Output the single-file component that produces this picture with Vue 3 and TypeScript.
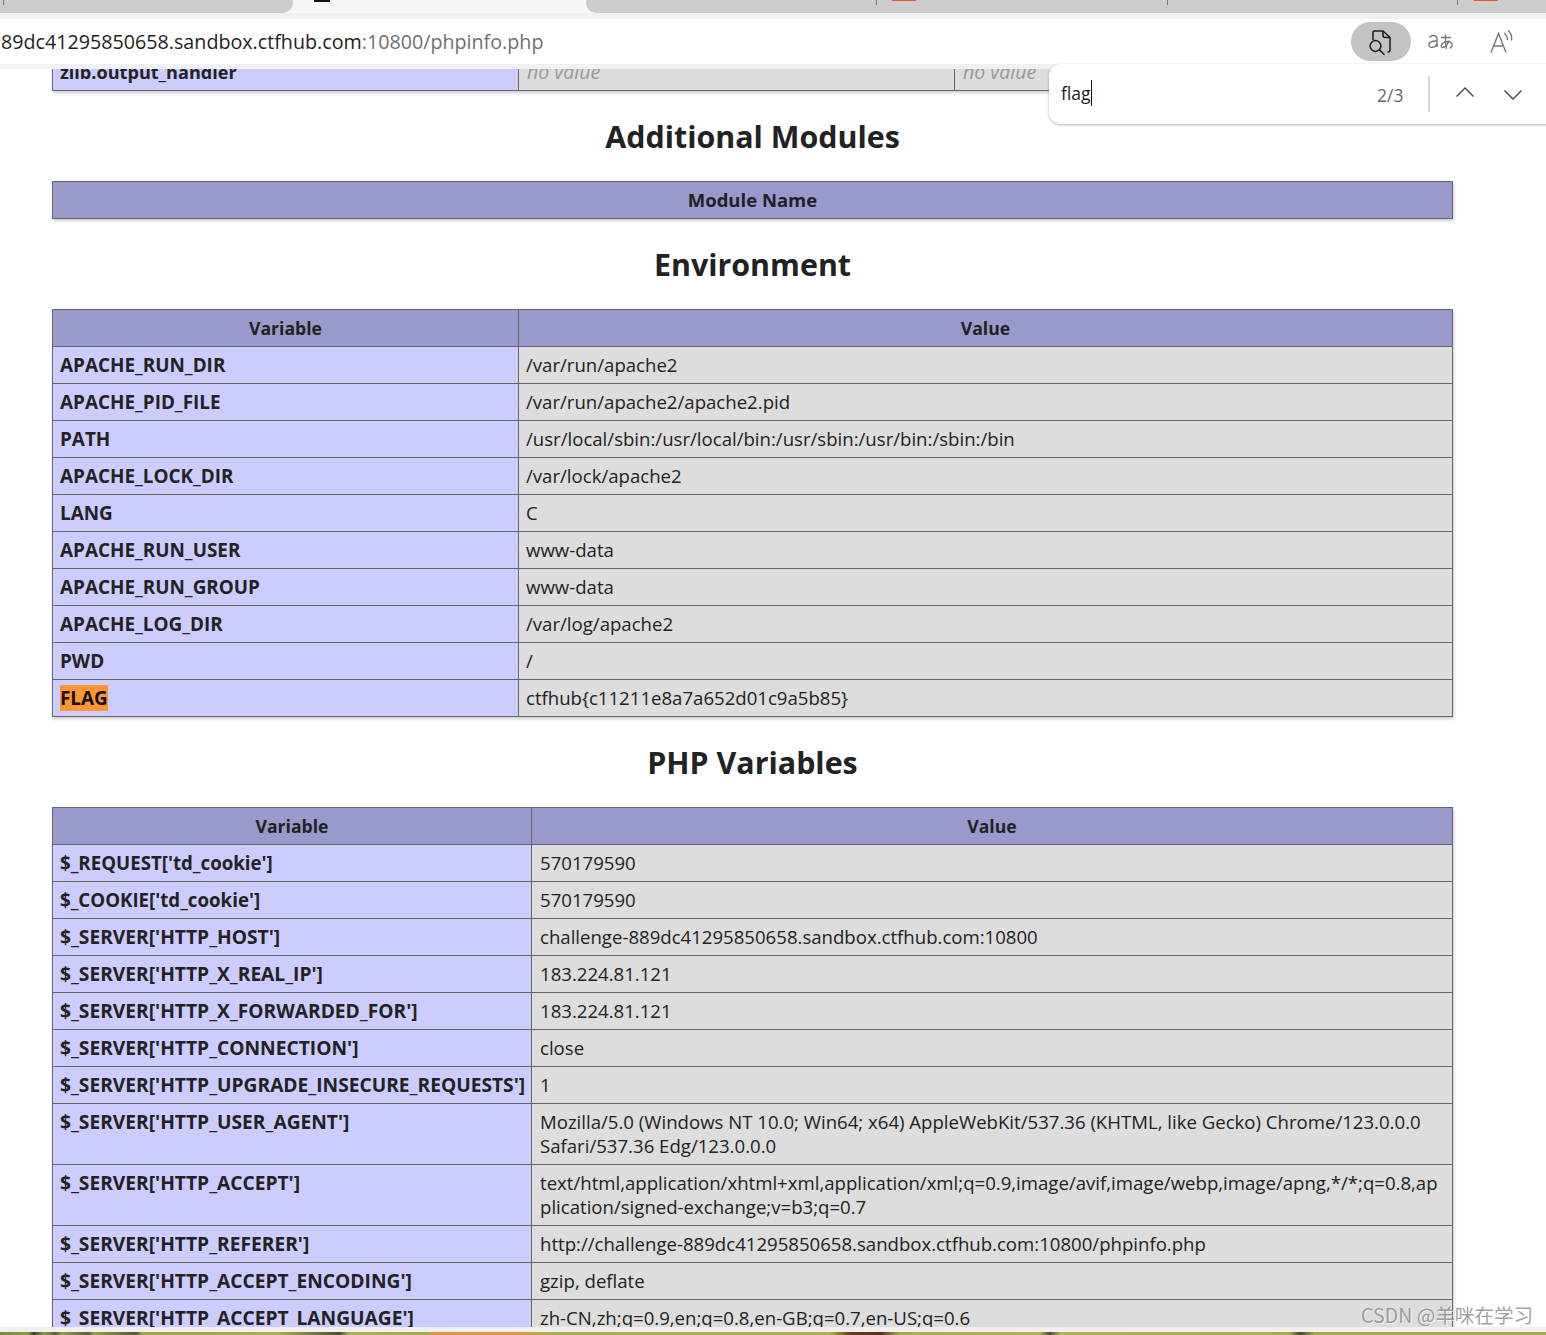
<script setup lang="ts">
interface Row { k: string; v: string; mark?: boolean }
const envRows: Row[] = [
  { k: 'APACHE_RUN_DIR', v: '/var/run/apache2' },
  { k: 'APACHE_PID_FILE', v: '/var/run/apache2/apache2.pid' },
  { k: 'PATH', v: '/usr/local/sbin:/usr/local/bin:/usr/sbin:/usr/bin:/sbin:/bin' },
  { k: 'APACHE_LOCK_DIR', v: '/var/lock/apache2' },
  { k: 'LANG', v: 'C' },
  { k: 'APACHE_RUN_USER', v: 'www-data' },
  { k: 'APACHE_RUN_GROUP', v: 'www-data' },
  { k: 'APACHE_LOG_DIR', v: '/var/log/apache2' },
  { k: 'PWD', v: '/' },
  { k: 'FLAG', v: 'ctfhub{c11211e8a7a652d01c9a5b85}', mark: true },
]
const phpRows: Row[] = [
  { k: "$_REQUEST['td_cookie']", v: '570179590' },
  { k: "$_COOKIE['td_cookie']", v: '570179590' },
  { k: "$_SERVER['HTTP_HOST']", v: 'challenge-889dc41295850658.sandbox.ctfhub.com:10800' },
  { k: "$_SERVER['HTTP_X_REAL_IP']", v: '183.224.81.121' },
  { k: "$_SERVER['HTTP_X_FORWARDED_FOR']", v: '183.224.81.121' },
  { k: "$_SERVER['HTTP_CONNECTION']", v: 'close' },
  { k: "$_SERVER['HTTP_UPGRADE_INSECURE_REQUESTS']", v: '1' },
  { k: "$_SERVER['HTTP_USER_AGENT']", v: 'Mozilla/5.0 (Windows NT 10.0; Win64; x64) AppleWebKit/537.36 (KHTML, like Gecko) Chrome/123.0.0.0 Safari/537.36 Edg/123.0.0.0' },
  { k: "$_SERVER['HTTP_ACCEPT']", v: 'text/html,application/xhtml+xml,application/xml;q=0.9,image/avif,image/webp,image/apng,*/*;q=0.8,application/signed-exchange;v=b3;q=0.7' },
  { k: "$_SERVER['HTTP_REFERER']", v: 'http://challenge-889dc41295850658.sandbox.ctfhub.com:10800/phpinfo.php' },
  { k: "$_SERVER['HTTP_ACCEPT_ENCODING']", v: 'gzip, deflate' },
  { k: "$_SERVER['HTTP_ACCEPT_LANGUAGE']", v: 'zh-CN,zh;q=0.9,en;q=0.8,en-GB;q=0.7,en-US;q=0.6' },
]
</script>

<template>
  <div class="window">
    <header class="chrome">
      <div class="tabs">
        <div class="tab tab-left"><i class="sep sep-left"></i></div>
        <div class="tab tab-active"><span class="tab-glyph"></span></div>
        <div class="tab tab-right">
          <i class="sep" style="left: 290px"></i><i class="fav" style="left: 306px"></i>
          <i class="sep" style="left: 581px"></i>
          <i class="sep" style="left: 871px"></i><i class="fav" style="left: 888px"></i>
        </div>
      </div>
      <div class="addr">
        <div class="url">89dc41295850658.sandbox.ctfhub.com<span class="path">:10800/phpinfo.php</span></div>
        <div class="tools">
          <span class="tool tool-on">
            <svg width="26" height="28" viewBox="0 0 26 28" fill="none" stroke="#1a1a1a" stroke-width="1.5">
              <path d="M5 12V4.5Q5 3 6.5 3H15L22 9.5V22Q22 24 20 24H19.5" />
              <path d="M15 3V7.5Q15 9.5 17 9.5H22" />
              <circle cx="7.5" cy="18" r="5.4" />
              <path d="M11.3 21.8L16.5 26.8" />
            </svg>
          </span>
          <span class="tool">
            <svg width="28" height="22" viewBox="0 0 28 22" fill="none" stroke="#777" stroke-width="1.4">
              <path d="M2.5 6.5Q4 4.5 6.5 4.5Q10 4.5 10 8V16" />
              <path d="M10 10Q3 9.5 2 13Q1.5 16.5 5 16.5Q8 16.5 10 13" />
              <path d="M14 6.5H24M18.5 3.5Q18 12 19.5 18M22 9.5Q20 16 15.5 16.5Q13 15.5 15.5 12.5Q19 9.5 23.5 11Q27 13.5 23 17.5" />
            </svg>
          </span>
          <span class="tool tool-read">
            <svg width="26" height="24" viewBox="0 0 26 24" fill="none" stroke="#777" stroke-width="1.4">
              <path d="M2 22.5L9.5 3.5L17 22.5M4.6 16H14.4" />
              <path d="M15 3Q18.5 5.5 18.5 10M19 0.5Q23.5 4.5 22.5 10.5" />
            </svg>
          </span>
        </div>
      </div>
    </header>

    <main class="page">
      <table class="info top-table">
        <colgroup><col class="c-env" /><col class="c-mid" /><col /></colgroup>
        <tbody>
          <tr><td class="e">zlib.output_handler</td><td class="v"><i>no value</i></td><td class="v"><i>no value</i></td></tr>
        </tbody>
      </table>

      <h2>Additional Modules</h2>
      <table class="info module-table">
        <tbody><tr class="h"><th>Module Name</th></tr></tbody>
      </table>

      <h2>Environment</h2>
      <table class="info">
        <colgroup><col class="c-env" /><col /></colgroup>
        <tbody>
          <tr class="h"><th>Variable</th><th>Value</th></tr>
          <tr v-for="r in envRows" :key="r.k">
            <td class="e"><mark v-if="r.mark">{{ r.k }}</mark><template v-else>{{ r.k }}</template></td>
            <td class="v">{{ r.v }}</td>
          </tr>
        </tbody>
      </table>

      <h2>PHP Variables</h2>
      <table class="info php-table">
        <colgroup><col class="c-php" /><col /></colgroup>
        <tbody>
          <tr class="h"><th>Variable</th><th>Value</th></tr>
          <tr v-for="r in phpRows" :key="r.k">
            <td class="e" :class="{ low: r.k.includes('td_') }">{{ r.k }}</td>
            <td class="v">{{ r.v }}</td>
          </tr>
        </tbody>
      </table>
    </main>

    <footer class="foot"><div class="wall"></div></footer>

    <div class="find">
      <span class="query">flag</span><span class="caret"></span>
      <span class="count">2/3</span>
      <span class="divider"></span>
      <svg class="chev chev-up" width="20" height="12" viewBox="0 0 20 12" fill="none" stroke="#444" stroke-width="1.4"><path d="M1.5 10.5L10 2L18.5 10.5" /></svg>
      <svg class="chev chev-down" width="20" height="12" viewBox="0 0 20 12" fill="none" stroke="#444" stroke-width="1.4"><path d="M1.5 1.5L10 10L18.5 1.5" /></svg>
    </div>
    <div class="mark-wm">CSDN @羊咪在学习</div>
  </div>
</template>

<style>
html, body { margin: 0; background: #fff; }
</style>

<style scoped>
.window {
  position: relative;
  width: 1546px;
  height: 1335px;
  overflow: hidden;
  display: flex;
  flex-direction: column;
  background: #fff;
  font-family: "Open Sans", "Noto Sans", sans-serif;
  color: #222;
}
.chrome { flex: none; background: #f1f1f1; height: 69px; display: flex; flex-direction: column; }
.tabs { height: 13px; display: flex; flex: none; background: #f7f7f7; }
.tab { height: 13px; background: #ccc; position: relative; flex: none; }
.tab-left { width: 293px; border-bottom-right-radius: 10px; }
.tab-active { width: 293px; background: #f7f7f7; }
.tab-glyph { position: absolute; left: 21px; top: 0; width: 16px; height: 2px; background: #111; }
.tab-right { flex: 1; border-bottom-left-radius: 10px; }
.sep { position: absolute; top: 0; width: 1px; height: 5px; background: #777; }
.sep-left { left: 3px; }
.fav { position: absolute; top: 0; width: 24px; height: 1px; background: #f0512d; }
.addr { height: 45px; margin-top: 6px; background: #fff; display: flex; align-items: center; flex: none; }
.url { font-size: 19.7px; color: #1e1e1e; padding-left: 1px; white-space: nowrap; }
.path { color: #6f6f6f; }
.tools { margin-left: auto; display: flex; align-items: center; margin-right: 15px; }
.tool { display: flex; align-items: center; justify-content: center; width: 60px; height: 39px; border-radius: 20px; }
.tool-on { background: #c3c3c3; }
.tool-read svg { margin-left: 2px; }

.page { flex: 1; min-height: 0; overflow: hidden; padding: 0 93px 0 52px; font-size: 18.6px; line-height: 24px; }
table.info {
  width: 1401px;
  table-layout: fixed;
  border-collapse: collapse;
  box-shadow: 1px 2px 3px #ccc;
  font-size: 18.6px;
  line-height: 24px;
}
.top-table { margin-top: -16px; }
.c-env { width: 466px; }
.c-mid { width: 436px; }
.c-php { width: 479px; }
td, th { border: 1px solid #666; padding: 6px 7px; vertical-align: baseline; }
.h th { background: #99c; font-weight: 700; text-align: center; font-size: 17.6px; }
.module-table .h th { font-size: 18.5px; }
.e { background: #ccf; font-weight: 700; font-size: 18.9px; white-space: nowrap; }
.top-table .e { font-size: 18.1px; }
.php-table .e { font-size: 19.2px; }
.php-table .e.low { font-size: 18.7px; }
.php-table .v { padding-left: 8px; }
.v { background: #ddd; overflow-wrap: anywhere; }
.v i { color: #999; font-size: 19.5px; margin-left: 1px; }
mark { background: #ff9632; color: #111; }
h2 { margin: 0; text-align: center; font-size: 30.4px; font-weight: 700; line-height: 41px; padding: 25px 0 24px; color: #222; }

.foot { flex: none; height: 8px; background: #f0f0f0; display: flex; flex-direction: column; justify-content: flex-end; }
.wall {
  height: 3px;
  background: linear-gradient(90deg,
    #7d8a3e 0, #8f9a45 28px, #3e3f22 34px, #8f9a45 44px, #5d6030 56px, #97a04a 62px,
    #5a5c2e 88px, #9aa24b 94px, #54582c 136px, #a0a64e 142px, #a8ac52 280px, #4f5029 340px,
    #a8ac52 348px, #a8a850 425px, #d49a45 435px, #dc9a48 520px, #a9ad52 560px, #aeb052 830px,
    #6a3d1c 850px, #5a2f18 880px, #a8aa50 900px, #b3b454 1040px, #4c4d28 1050px, #b0b253 1060px,
    #a8aa50 1290px, #45462a 1300px, #a6a950 1315px, #a6a950 1546px);
}

.find {
  position: absolute;
  left: 1049px;
  top: 64px;
  width: 520px;
  height: 60px;
  box-sizing: border-box;
  background: #fff;
  border-radius: 12px;
  box-shadow: 0 1px 3px rgba(0,0,0,.3);
  display: flex;
  align-items: center;
  padding: 0 0 2px 12px;
}
.query { font-size: 17.5px; color: #1a1a1a; }
.caret { width: 1.5px; height: 26px; background: #111; }
.count { font-size: 17.5px; color: #666; position: absolute; left: 328px; top: 19px; }
.divider { position: absolute; left: 379px; top: 12px; width: 2px; height: 36px; background: #d6d6d6; }
.chev { position: absolute; }
.chev-up { left: 406px; top: 22px; }
.chev-down { left: 454px; top: 25px; }

.mark-wm {
  position: absolute;
  left: 1361px;
  top: 1303px;
  font-family: "Noto Sans CJK SC", "Liberation Sans", sans-serif;
  font-size: 19.6px;
  line-height: 24px;
  color: rgba(130,130,130,.75);
  text-shadow: 1px 1px 0 rgba(255,255,255,.6);
  white-space: nowrap;
}
</style>
